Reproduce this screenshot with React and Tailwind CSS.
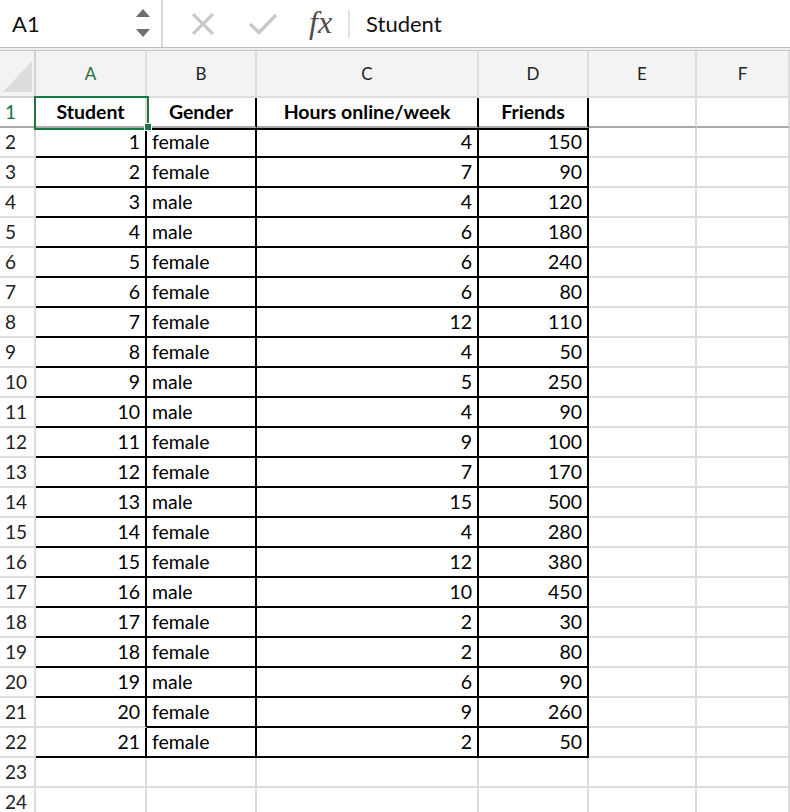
import React from 'react';

const FONT = "font-['Lato','Liberation_Sans',sans-serif]";

const data = [
  [1, 'female', 4, 150],
  [2, 'female', 7, 90],
  [3, 'male', 4, 120],
  [4, 'male', 6, 180],
  [5, 'female', 6, 240],
  [6, 'female', 6, 80],
  [7, 'female', 12, 110],
  [8, 'female', 4, 50],
  [9, 'male', 5, 250],
  [10, 'male', 4, 90],
  [11, 'female', 9, 100],
  [12, 'female', 7, 170],
  [13, 'male', 15, 500],
  [14, 'female', 4, 280],
  [15, 'female', 12, 380],
  [16, 'male', 10, 450],
  [17, 'female', 2, 30],
  [18, 'female', 2, 80],
  [19, 'male', 6, 90],
  [20, 'female', 9, 260],
  [21, 'female', 2, 50],
];

const GRID = 'grid grid-cols-[36px_111px_110px_222px_110px_108px_1fr]';
const CELL = 'h-[30px] flex items-center px-[5px] text-[19.5px] text-black border-r-2 border-b-2 border-[#dcdcdc] overflow-hidden whitespace-nowrap';

const TopBar = () => (
  <div className="h-[47px] flex items-stretch bg-white">
    <div className="w-[163px] flex items-center justify-between pl-[12px] pr-[10px] border-r-2 border-[#d9d9d9]">
      <span className="text-[22px] text-[#111]">A1</span>
      <svg width="16" height="30" viewBox="0 0 16 30">
        <path d="M1 8 L15 8 L8 0 Z" fill="#6f6f6f" />
        <path d="M1 20 L15 20 L8 28 Z" fill="#6f6f6f" />
      </svg>
    </div>
    <div className="flex items-center pl-[28px]">
      <svg width="24" height="22" viewBox="0 0 24 22">
        <path d="M2 1 L22 21 M22 1 L2 21" stroke="#c9c9c9" strokeWidth="3.2" fill="none" />
      </svg>
      <svg className="ml-[33px]" width="30" height="22" viewBox="0 0 30 22">
        <path d="M2 11 L11 19.5 L28 2" stroke="#c9c9c9" strokeWidth="3.4" fill="none" />
      </svg>
      <span className="ml-[31px] font-['Liberation_Serif',serif] italic text-[32px] text-[#4d4d4d] leading-none pb-[4px]">fx</span>
      <div className="ml-[16px] w-[2px] h-[28px] bg-[#e2e2e2]" />
      <span className="ml-[16px] text-[22px] text-[#111]">Student</span>
    </div>
  </div>
);

const HeaderRow = () => {
  const letters = ['A', 'B', 'C', 'D', 'E', 'F'];
  return (
    <div className={`${GRID} h-[47px] bg-[#f3f3f3]`}>
      <div className="relative border-r-2 border-b-2 border-[#d2d2d2]">
        <svg className="absolute left-[3px] top-[10px]" width="30" height="32" viewBox="0 0 30 32">
          <path d="M0 31 L29 31 L29 0 Z" fill="#dcdcdc" />
        </svg>
      </div>
      {letters.map((l) => (
        <div
          key={l}
          className={`flex items-center justify-center text-[17px] border-r-2 border-b-2 border-[#dedede] ${
            l === 'A' ? 'text-[#1e6e42]' : 'text-[#222]'
          }`}
        >
          {l}
        </div>
      ))}
    </div>
  );
};

const RowLabel = ({ n }) => (
  <div
    className={`h-[30px] flex items-center pl-[5px] text-[19px] border-r-2 border-b-2 border-[#dcdcdc] bg-white ${
      n === 1 ? 'text-[#1e6e42] border-b-[#a9a9a9]' : 'text-[#222]'
    }`}
  >
    {n}
  </div>
);

export default function App() {
  return (
    <div className={`${FONT} relative w-[790px] h-[812px] overflow-hidden bg-white`}>
      <TopBar />
      <div className="h-px bg-[#bdbdbd]" />
      <div className="h-[2px] bg-[#eeeeee]" />
      <div className="h-px bg-[#c4c4c4]" />
      <div className="relative">
        <HeaderRow />

        {/* row 1: column titles */}
        <div className={GRID}>
          <RowLabel n={1} />
          <div className={`${CELL} justify-center font-bold border-b-[#a9a9a9]`}>Student</div>
          <div className={`${CELL} justify-center font-bold border-r-black border-b-[#a9a9a9]`}>Gender</div>
          <div className={`${CELL} justify-center font-bold border-r-black border-b-[#a9a9a9]`}>Hours online/week</div>
          <div className={`${CELL} justify-center font-bold border-r-black border-b-[#a9a9a9]`}>Friends</div>
          <div className={`${CELL} border-b-[#a9a9a9]`} />
          <div className={`${CELL} border-b-[#a9a9a9] border-r-0`} />
        </div>

        {data.map((row, i) => {
          const n = i + 2;
          const top = n === 2 ? 'shadow-[inset_0_2px_0_#000]' : '';
          const aBottom = n === 21 ? '' : 'border-b-black';
          return (
            <div key={n} className={GRID}>
              <RowLabel n={n} />
              <div className={`${CELL} justify-end border-r-black ${aBottom}`}>{row[0]}</div>
              <div className={`${CELL} border-r-black border-b-black ${top}`}>{row[1]}</div>
              <div className={`${CELL} justify-end border-r-black border-b-black ${top}`}>{row[2]}</div>
              <div className={`${CELL} justify-end border-r-black border-b-black ${top}`}>{row[3]}</div>
              <div className={CELL} />
              <div className={`${CELL} border-r-0`} />
            </div>
          );
        })}

        {[23, 24].map((n) => (
          <div key={n} className={GRID}>
            <RowLabel n={n} />
            <div className={CELL} />
            <div className={CELL} />
            <div className={CELL} />
            <div className={CELL} />
            <div className={CELL} />
            <div className={`${CELL} border-r-0`} />
          </div>
        ))}

        {/* active cell A1 */}
        <div className="absolute left-[34px] top-[45px] w-[115px] h-[34px] border-2 border-[#217346] pointer-events-none" />
        <div className="absolute left-[144px] top-[72px] w-[8px] h-[8px] bg-[#217346] border border-white pointer-events-none" />
      </div>
    </div>
  );
}
